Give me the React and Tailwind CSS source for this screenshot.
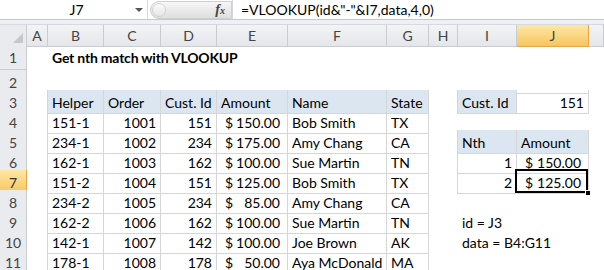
import React from 'react';

const COLS = 'grid grid-cols-[27px_21px_56px_57px_56px_71px_99px_42px_29px_59px_72px_1fr]';

const data = [
  ['151-1', 1001, 151, '150.00', 'Bob Smith', 'TX'],
  ['234-1', 1002, 234, '175.00', 'Amy Chang', 'CA'],
  ['162-1', 1003, 162, '100.00', 'Sue Martin', 'TN'],
  ['151-2', 1004, 151, '125.00', 'Bob Smith', 'TX'],
  ['234-2', 1005, 234, '85.00', 'Amy Chang', 'CA'],
  ['162-2', 1006, 162, '100.00', 'Sue Martin', 'TN'],
  ['142-1', 1007, 142, '100.00', 'Joe Brown', 'AK'],
  ['178-1', 1008, 178, '50.00', 'Aya McDonald', 'MA'],
];

const cell = 'flex items-center pt-[1px] px-[4px] whitespace-nowrap overflow-visible';
const grid = 'border-r border-b border-[#d6d6d6]';
const head = 'bg-[#dce6f1] border-r border-b border-[#d6d6d6]';

function RowHead({ n, selected }) {
  return (
    <div
      className={
        selected
          ? 'flex items-center justify-center pt-[2px] text-[14px] text-[#333] bg-gradient-to-b from-[#fde7a6] to-[#f6c65c] border-r border-b border-[#e3a64a]'
          : 'flex items-center justify-center pt-[2px] text-[14px] text-[#444] bg-[#e9ebee] border-r border-b border-[#c9ccd1]'
      }
    >
      {n}
    </div>
  );
}

function Money({ v, extra = '' }) {
  return (
    <div className={`flex items-center justify-between pt-[1px] pl-[8px] pr-[7px] ${extra}`}>
      <span>$</span>
      <span>{v}</span>
    </div>
  );
}

function Empty({ cls = '' }) {
  return <div className={cls} />;
}

export default function App() {
  const letters = ['A', 'B', 'C', 'D', 'E', 'F', 'G', 'H', 'I', 'J', ''];

  return (
    <div className="w-[604px] h-[270px] overflow-hidden bg-white text-black font-['Lato',sans-serif] text-[14px]">
      {/* formula bar */}
      <div className="flex h-[20px] bg-white border-b border-[#c5c9cf]">
        <div className="relative w-[148px] flex items-center justify-center border-r border-[#d4d7db]">
          <span className="pl-[6px] text-[14px]">J7</span>
          <span className="absolute right-[4px] top-[8px] w-0 h-0 border-l-[4px] border-r-[4px] border-t-[4px] border-l-transparent border-r-transparent border-t-[#555]" />
        </div>
        <div className="flex items-center w-[82px] h-[18px] mt-[1px] ml-[2px] pl-[1px] pr-[6px] rounded-l-full bg-gradient-to-b from-[#f7f7f7] to-[#dedede] border border-[#cfcfcf]">
          <div className="w-[14px] h-[14px] rounded-full bg-gradient-to-b from-[#fbfbfb] to-[#e6e6e6] border border-[#d2d2d2]" />
          <span className="ml-auto font-['Liberation_Serif',serif] italic font-bold text-[14px] text-[#444] leading-none">
            f<span className="text-[10px]">x</span>
          </span>
        </div>
        <div className="flex items-center pl-[8px] text-[14px] border-l border-[#d4d7db]">
          =VLOOKUP(id&amp;"-"&amp;I7,data,4,0)
        </div>
      </div>
      <div className="h-[5px] bg-[#eef0f3] border-b border-[#d6d9de]" />

      {/* column headers */}
      <div className={`${COLS} h-[18px] text-[14px] text-[#444]`}>
        <div className="flex items-end justify-end pr-[3px] pb-[3px] bg-[#e9ebee] border-r border-b border-[#c9ccd1]">
          <svg width="10" height="10" viewBox="0 0 10 10">
            <path d="M10 0 L10 10 L0 10 Z" fill="#c4c8cd" />
          </svg>
        </div>
        {letters.map((l, i) =>
          l === 'J' ? (
            <div
              key={i}
              className="flex items-center justify-center bg-gradient-to-b from-[#fde7a6] to-[#f6c65c] border-r border-b border-[#e3a64a]"
            >
              {l}
            </div>
          ) : (
            <div
              key={i}
              className="flex items-center justify-center bg-gradient-to-b from-[#f3f4f6] to-[#e4e6e9] border-r border-b border-[#c9ccd1]"
            >
              {l}
            </div>
          )
        )}
      </div>

      {/* row 1 */}
      <div className={`${COLS} h-[27px]`}>
        <RowHead n={1} />
        <Empty />
        <div className="col-span-5 flex items-end pb-[2px] px-[4px] font-bold text-[14px] tracking-[-0.2px] whitespace-nowrap">
          Get nth match with VLOOKUP
        </div>
      </div>

      {/* row 2 */}
      <div className={`${COLS} h-[20px]`}>
        <RowHead n={2} />
        <Empty />
        <Empty cls="border-b border-[#d6d6d6]" />
        <Empty cls="border-b border-[#d6d6d6]" />
        <Empty cls="border-b border-[#d6d6d6]" />
        <Empty cls="border-b border-[#d6d6d6]" />
        <Empty cls="border-b border-[#d6d6d6]" />
        <Empty cls="border-b border-[#d6d6d6]" />
        <Empty />
        <Empty cls="border-b border-[#d6d6d6]" />
        <Empty cls="border-b border-[#d6d6d6]" />
      </div>

      {/* row 3: table headers */}
      <div className={`${COLS} h-[20px]`}>
        <RowHead n={3} />
        <Empty cls="border-r border-[#d6d6d6]" />
        <div className={`${cell} ${head}`}>Helper</div>
        <div className={`${cell} ${head}`}>Order</div>
        <div className={`${cell} ${head}`}>Cust. Id</div>
        <div className={`${cell} ${head}`}>Amount</div>
        <div className={`${cell} ${head}`}>Name</div>
        <div className={`${cell} ${head}`}>State</div>
        <Empty cls="border-r border-[#d6d6d6]" />
        <div className={`${cell} ${head}`}>Cust. Id</div>
        <div className={`${cell} ${grid} justify-end`}>151</div>
      </div>

      {/* rows 4 - 11 */}
      {data.map((r, i) => {
        const n = i + 4;
        return (
          <div key={n} className={`${COLS} h-[20px]`}>
            <RowHead n={n} selected={n === 7} />
            <Empty cls="border-r border-[#d6d6d6]" />
            <div className={`${cell} ${grid}`}>{r[0]}</div>
            <div className={`${cell} ${grid} justify-end`}>{r[1]}</div>
            <div className={`${cell} ${grid} justify-end`}>{r[2]}</div>
            <Money v={r[3]} extra={grid} />
            <div className={`${cell} ${grid}`}>{r[4]}</div>
            <div className={`${cell} ${grid}`}>{r[5]}</div>
            {n === 4 && (
              <>
                <Empty />
                <Empty cls="border-b border-[#d6d6d6]" />
                <Empty cls="border-b border-[#d6d6d6]" />
              </>
            )}
            {n === 5 && (
              <>
                <Empty cls="border-r border-[#d6d6d6]" />
                <div className={`${cell} ${head}`}>Nth</div>
                <div className={`${cell} ${head}`}>Amount</div>
              </>
            )}
            {n === 6 && (
              <>
                <Empty cls="border-r border-[#d6d6d6]" />
                <div className={`${cell} ${grid} justify-end`}>1</div>
                <Money v="150.00" extra={grid} />
              </>
            )}
            {n === 7 && (
              <>
                <Empty cls="border-r border-[#d6d6d6]" />
                <div className={`${cell} ${grid} justify-end`}>2</div>
                <div className={`relative ${grid}`}>
                  <Money v="125.00" extra="h-full" />
                  <div className="absolute -left-[2px] -top-[1px] right-0 bottom-0 border-2 border-black pointer-events-none" />
                  <div className="absolute -right-[3px] -bottom-[3px] w-[6px] h-[6px] bg-black border border-white" />
                </div>
              </>
            )}
            {n === 9 && (
              <>
                <Empty />
                <div className={cell}>id = J3</div>
              </>
            )}
            {n === 10 && (
              <>
                <Empty />
                <div className={`${cell} col-span-2`}>data = B4:G11</div>
              </>
            )}
          </div>
        );
      })}
    </div>
  );
}
